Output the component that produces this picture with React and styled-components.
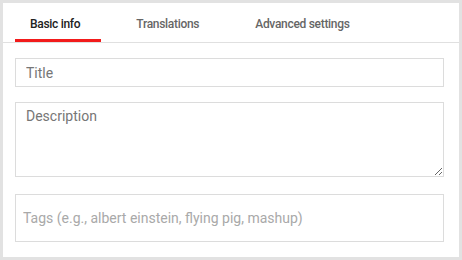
import React, { useState } from 'react';
import styled, { createGlobalStyle } from 'styled-components';

const GlobalStyle = createGlobalStyle`
    html, body {
        margin: 0;
        padding: 0;
        background: #e2e2e2;
        font-family: Roboto, "Liberation Sans", sans-serif;
    }
`;

const Card = styled.section`
    margin: 3px;
    height: 254px;
    box-sizing: border-box;
    background: #fff;
    display: flex;
    flex-direction: column;
`;

const TabBar = styled.nav`
    display: flex;
    gap: 20px;
    height: 39px;
    padding: 0 0 0 12px;
    border-bottom: 1px solid #e0e0e0;
    box-sizing: content-box;
`;

const Tab = styled.button`
    border: none;
    background: none;
    font-family: inherit;
    font-size: 12px;
    font-weight: 500;
    letter-spacing: -0.3px;
    padding: 6px 21px 0 15px;
    color: ${(p) => (p.$active ? '#222' : '#666')};
    border-bottom: 3px solid ${(p) => (p.$active ? '#f21b1b' : 'transparent')};
    cursor: pointer;
`;

const Form = styled.div`
    display: flex;
    flex-direction: column;
    padding: 15px 15px 0 12px;
`;

const fieldBase = `
    box-sizing: border-box;
    width: 100%;
    border: 1px solid #dcdcdc;
    font-family: Roboto, "Liberation Sans", sans-serif;
    font-size: 14px;
    color: #333;
    outline: none;
    border-radius: 0;
`;

const TextInput = styled.input`
    ${fieldBase}
    height: 29px;
    padding: 0 10px;
    margin-bottom: ${(p) => p.$after}px;
    &::placeholder {
        color: ${(p) => p.$tone};
    }
`;

const TextArea = styled.textarea`
    ${fieldBase}
    height: 75px;
    padding: 5px 10px;
    resize: vertical;
    margin-bottom: 17px;
    display: block;
    &::placeholder {
        color: #767676;
    }
`;

const TagsInput = styled(TextInput)`
    height: 48px;
    padding: 0 7px;
`;

const tabs = ['Basic info', 'Translations', 'Advanced settings'];

export default function App() {
    const [active, setActive] = useState(0);

    return (
        <>
            <GlobalStyle />
            <Card>
                <TabBar>
                    {tabs.map((label, i) => (
                        <Tab key={label} $active={active === i} onClick={() => setActive(i)}>
                            {label}
                        </Tab>
                    ))}
                </TabBar>
                <Form>
                    <TextInput placeholder="Title" $after={15} $tone="#767676" />
                    <TextArea placeholder="Description" />
                    <TagsInput
                        placeholder="Tags (e.g., albert einstein, flying pig, mashup)"
                        $after={0}
                        $tone="#a9a9a9"
                    />
                </Form>
            </Card>
        </>
    );
}
